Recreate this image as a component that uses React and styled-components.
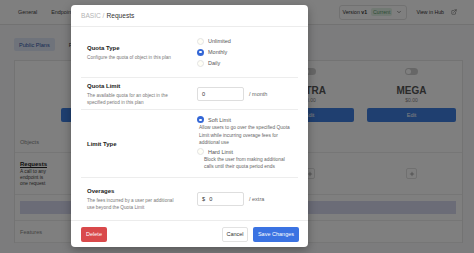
import React from "react";
import styled, { createGlobalStyle } from "styled-components";
import { ChevronDown, ExternalLink, Plus } from "lucide-react";

let Global = createGlobalStyle`
  html, body {
    margin: 0;
    padding: 0;
    width: 474px;
    height: 253px;
    overflow: hidden;
    background: #fdfdfd;
    font-family: "Liberation Sans", Arial, sans-serif;
  }
`;

let Page = styled.div`
  position: relative;
  width: 474px;
  height: 253px;
  overflow: hidden;
  background: #f9f9fa;
`;

let TopNav = styled.div`
  display: flex;
  align-items: center;
  justify-content: space-between;
  height: 24px;
  padding: 0 17px 0 18px;
  border-bottom: 1px solid #e4e4e4;
  background: #fff;
`;

let NavLinks = styled.div`
  display: flex;
  gap: 14px;
  font-size: 5.4px;
  color: #444;
`;

let NavRight = styled.div`
  display: flex;
  align-items: center;
  gap: 9px;
  font-size: 5.2px;
  color: #333;
`;

let VersionPill = styled.div`
  display: flex;
  align-items: center;
  gap: 4px;
  height: 13px;
  padding: 0 4px 0 3px;
  border: 1px solid #e2e2e2;
  border-radius: 3px;
  b {
    font-weight: bold;
  }
`;

let CurrentTag = styled.span`
  background: #e2f2e6;
  color: #5a9a6a;
  padding: 1px 2px;
  border-radius: 2px;
`;

let HubLink = styled.div`
  display: flex;
  align-items: center;
  gap: 7px;
`;

let Content = styled.div`
  padding: 13px 11px 0 14px;
`;

let Tabs = styled.div`
  display: flex;
  gap: 9px;
  font-size: 5.6px;
  color: #333;
`;

let Tab = styled.div`
  height: 13px;
  display: flex;
  align-items: center;
  padding: 0 5px;
  border-radius: 2px;
  background: ${(p) => (p.$active ? "#dfe6f6" : "transparent")};
  color: ${(p) => (p.$active ? "#2f56a8" : "#333")};
`;

let Card = styled.div`
  margin-top: 9px;
  background: #fff;
  border: 1px solid #e6e6e6;
  border-bottom: none;
  width: 447px;
`;

let Grid = styled.div`
  display: grid;
  grid-template-columns: 33px repeat(4, 89px);
  column-gap: 13px;
  padding: 0 6px 0 0;
  align-items: ${(p) => p.$align || "center"};
  height: ${(p) => p.$h}px;
  border-bottom: ${(p) => (p.$line ? "1px solid #ececec" : "none")};
`;

let PlanCol = styled.div`
  display: flex;
  flex-direction: column;
  align-items: center;
  padding-top: 7px;
`;

let Toggle = styled.div`
  width: 13px;
  height: 7px;
  border-radius: 4px;
  background: #cfcfcf;
  position: relative;
  &::after {
    content: "";
    position: absolute;
    left: 1px;
    top: 1px;
    width: 5px;
    height: 5px;
    border-radius: 50%;
    background: #fff;
  }
`;

let PlanName = styled.div`
  margin-top: 10px;
  font-size: 10px;
  font-weight: bold;
  color: #555;
  line-height: 11px;
`;

let PlanPrice = styled.div`
  font-size: 5px;
  color: #888;
  line-height: 7px;
  margin-top: 1px;
`;

let EditButton = styled.div`
  margin-top: 4px;
  width: 89px;
  height: 14px;
  border-radius: 2px;
  background: #3f7fe0;
  color: #fff;
  font-size: 5.5px;
  display: flex;
  align-items: center;
  justify-content: center;
`;

let SideLabel = styled.div`
  padding-left: 5px;
  font-size: 5.6px;
  color: #888;
  white-space: nowrap;
`;

let ObjectCell = styled.div`
  padding-left: 5px;
  white-space: nowrap;
  font-size: 4.8px;
  line-height: 6px;
  color: #444;
  b {
    display: block;
    font-size: 6px;
    line-height: 8px;
    color: #222;
    text-decoration: underline;
    margin-bottom: 1px;
  }
`;

let PlusBox = styled.div`
  justify-self: center;
  width: 9px;
  height: 9px;
  border: 1px solid #e0e0e0;
  border-radius: 2px;
  display: flex;
  align-items: center;
  justify-content: center;
  color: #333;
`;

let Bar = styled.div`
  grid-column: 1 / -1;
  margin-left: 5px;
  height: 13px;
  background: #d6d9ef;
`;

let Overlay = styled.div`
  position: absolute;
  inset: 0;
  background: rgba(0, 0, 0, 0.5);
  padding: 5px 0 0 71px;
`;

let Modal = styled.div`
  width: 237px;
  background: #fff;
  border-radius: 4px;
  box-shadow: 0 3px 10px rgba(0, 0, 0, 0.3);
`;

let ModalHeader = styled.div`
  height: 21px;
  display: flex;
  align-items: center;
  padding: 0 10px;
  border-bottom: 1px solid #ececec;
  font-size: 6.6px;
  color: #333;
  span {
    color: #b4b4b4;
    margin-right: 2px;
  }
`;

let FormRow = styled.div`
  margin: 0 10px;
  padding: 0 6px;
  height: ${(p) => p.$h}px;
  box-sizing: border-box;
  display: grid;
  grid-template-columns: 110px 1fr;
  align-items: center;
  border-bottom: ${(p) => (p.$last ? "none" : "1px solid #ededed")};
`;

let FieldLabel = styled.div`
  font-size: 6px;
  font-weight: bold;
  color: #222;
  line-height: 8px;
  margin-bottom: ${(p) => (p.$solo ? 0 : 2)}px;
`;

let FieldHelp = styled.div`
  font-size: 4.7px;
  line-height: 7px;
  color: #777;
`;

let RadioGroup = styled.div`
  display: flex;
  flex-direction: column;
`;

let RadioLine = styled.div`
  display: flex;
  align-items: center;
  gap: 4px;
  height: ${(p) => p.$h || 11}px;
  font-size: 5.5px;
  color: #555;
`;

let Radio = styled.div`
  width: 7px;
  height: 7px;
  box-sizing: border-box;
  border-radius: 50%;
  border: ${(p) => (p.$on ? "none" : "1px solid #e3e3e3")};
  background: ${(p) => (p.$on ? "#3467d6" : "#fffef6")};
  display: flex;
  align-items: center;
  justify-content: center;
  &::after {
    content: "";
    display: ${(p) => (p.$on ? "block" : "none")};
    width: 2.5px;
    height: 2.5px;
    border-radius: 50%;
    background: #fff;
  }
`;

let RadioHelp = styled.div`
  margin-left: ${(p) => p.$indent}px;
  margin-bottom: 1px;
  font-size: 4.85px;
  line-height: 7.5px;
  color: #666;
`;

let InputLine = styled.div`
  display: flex;
  align-items: center;
  gap: 5px;
  font-size: 5.5px;
  color: #666;
`;

let Input = styled.div`
  width: 47px;
  height: 14px;
  box-sizing: border-box;
  border: 1px solid #dedede;
  border-radius: 2px;
  padding-left: 4px;
  display: flex;
  align-items: center;
  gap: 4px;
  font-size: 5.6px;
  color: #333;
`;

let Footer = styled.div`
  height: 26px;
  display: flex;
  align-items: center;
  justify-content: space-between;
  padding: 0 9px 0 10px;
  border-top: 1px solid #ececec;
`;

let Actions = styled.div`
  display: flex;
  gap: 5px;
`;

let Button = styled.div`
  height: 15px;
  width: ${(p) => p.$w}px;
  box-sizing: border-box;
  border-radius: 2px;
  display: flex;
  align-items: center;
  justify-content: center;
  font-size: 5.5px;
  background: ${(p) => p.$bg};
  color: ${(p) => p.$color || "#fff"};
  border: ${(p) => (p.$outline ? "1px solid #e2e2e2" : "none")};
`;

export default function App() {
  const plans = [
    { name: "BASIC" },
    { name: "PRO" },
    { name: "ULTRA" },
    { name: "MEGA" },
  ];
  return (
    <>
      <Global />
      <Page>
        <TopNav>
          <NavLinks>
            <span>General</span>
            <span>Endpoints</span>
          </NavLinks>
          <NavRight>
            <VersionPill>
              <span>
                Version <b>v1</b>
              </span>
              <CurrentTag>Current</CurrentTag>
              <ChevronDown size={6} strokeWidth={2} />
            </VersionPill>
            <HubLink>
              View in Hub <ExternalLink size={6} strokeWidth={1.6} />
            </HubLink>
          </NavRight>
        </TopNav>
        <Content>
          <Tabs>
            <Tab $active>Public Plans</Tab>
            <Tab>Private Plans</Tab>
          </Tabs>
          <Card>
            <Grid $h={70} $align="start">
              <div />
              {plans.map((p) => (
                <PlanCol key={p.name}>
                  <Toggle />
                  <PlanName>{p.name}</PlanName>
                  <PlanPrice>$0.00</PlanPrice>
                  <EditButton>Edit</EditButton>
                </PlanCol>
              ))}
            </Grid>
            <Grid $h={21} $line>
              <SideLabel>Objects</SideLabel>
            </Grid>
            <Grid $h={41} $line>
              <ObjectCell>
                <b>Requests</b>
                A call to any
                <br />
                endpoint is
                <br />
                one request
              </ObjectCell>
              {plans.map((p) => (
                <PlusBox key={p.name}>
                  <Plus size={6} strokeWidth={1.5} />
                </PlusBox>
              ))}
            </Grid>
            <Grid $h={25} $line>
              <Bar />
            </Grid>
            <Grid $h={21} $line>
              <SideLabel>Features</SideLabel>
            </Grid>
          </Card>
        </Content>
        <Overlay>
          <Modal>
            <ModalHeader>
              <span>BASIC /</span> Requests
            </ModalHeader>
            <FormRow $h={51}>
              <div>
                <FieldLabel>Quota Type</FieldLabel>
                <FieldHelp>Configure the quota of object in this plan</FieldHelp>
              </div>
              <RadioGroup>
                <RadioLine>
                  <Radio />
                  Unlimited
                </RadioLine>
                <RadioLine>
                  <Radio $on />
                  Monthly
                </RadioLine>
                <RadioLine>
                  <Radio />
                  Daily
                </RadioLine>
              </RadioGroup>
            </FormRow>
            <FormRow $h={32}>
              <div>
                <FieldLabel>Quota Limit</FieldLabel>
                <FieldHelp>
                  The available quota for an object in the
                  <br />
                  specified period in this plan
                </FieldHelp>
              </div>
              <InputLine>
                <Input>0</Input>
                <span>/ month</span>
              </InputLine>
            </FormRow>
            <FormRow $h={68}>
              <FieldLabel $solo>Limit Type</FieldLabel>
              <RadioGroup>
                <RadioLine $h={9}>
                  <Radio $on />
                  Soft Limit
                </RadioLine>
                <RadioHelp $indent={2}>
                  Allow users to go over the specified Quota
                  <br />
                  Limit while incurring overage fees for
                  <br />
                  additional use
                </RadioHelp>
                <RadioLine $h={8}>
                  <Radio />
                  Hard Limit
                </RadioLine>
                <RadioHelp $indent={7}>
                  Block the user from making additional
                  <br />
                  calls until their quota period ends
                </RadioHelp>
              </RadioGroup>
            </FormRow>
            <FormRow $h={42} $last>
              <div>
                <FieldLabel>Overages</FieldLabel>
                <FieldHelp>
                  The fees incurred by a user per additional
                  <br />
                  use beyond the Quota Limit
                </FieldHelp>
              </div>
              <InputLine>
                <Input>
                  <span>$</span>
                  <span>0</span>
                </Input>
                <span>/ extra</span>
              </InputLine>
            </FormRow>
            <Footer>
              <Button $w={26} $bg="#d9494b">
                Delete
              </Button>
              <Actions>
                <Button $w={26} $bg="#fff" $color="#333" $outline>
                  Cancel
                </Button>
                <Button $w={46} $bg="#3b73e2">
                  Save Changes
                </Button>
              </Actions>
            </Footer>
          </Modal>
        </Overlay>
      </Page>
    </>
  );
}
